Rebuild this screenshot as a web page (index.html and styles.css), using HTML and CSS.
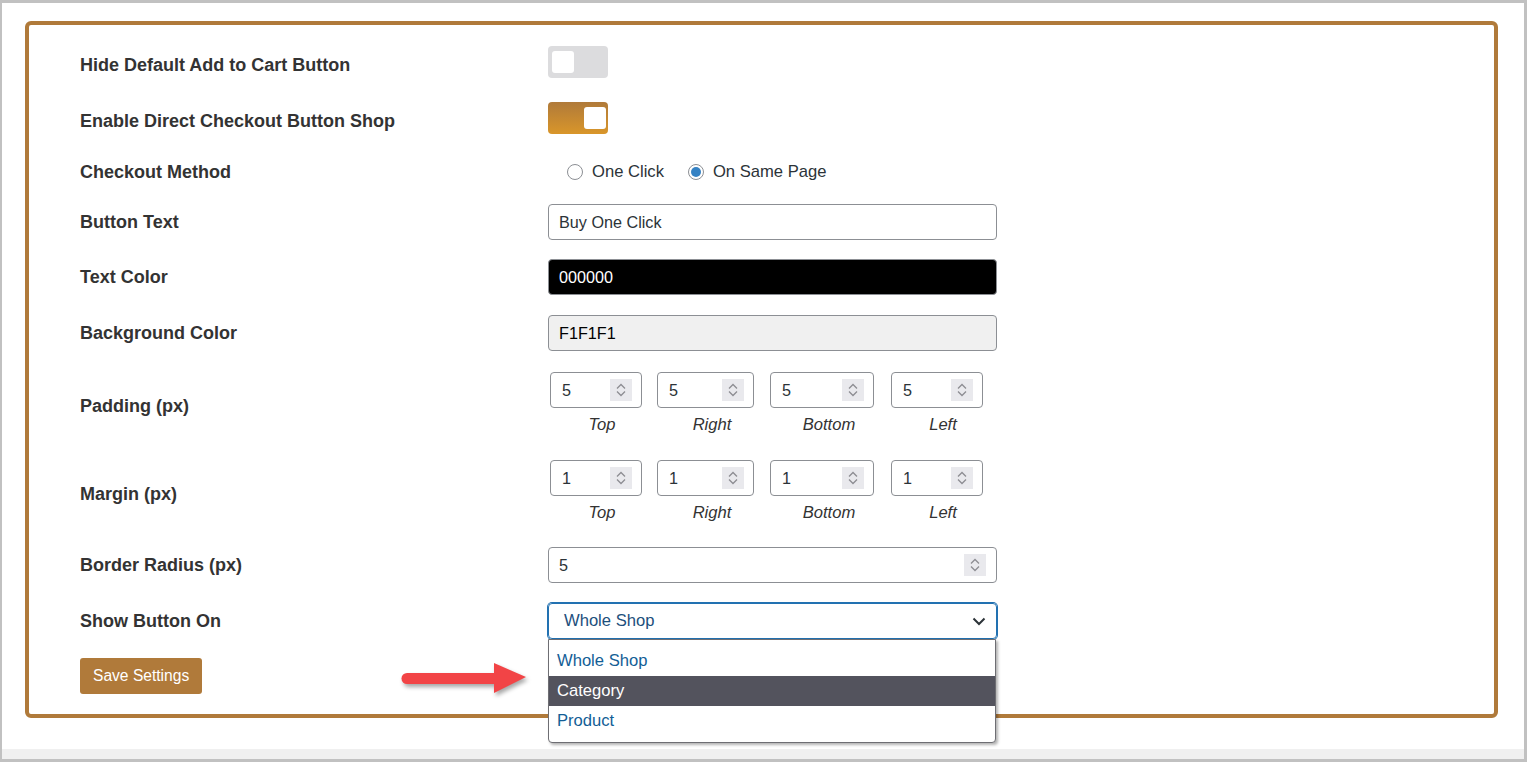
FILE: index.html
```html
<!DOCTYPE html>
<html lang="en">
<head>
  <meta charset="UTF-8">
  <title>Direct Checkout Settings</title>
  <link rel="stylesheet" href="styles.css">
</head>
<body>
<div class="frame">
  <div class="card">

    <div class="row row-toggle">
      <div class="label">Hide Default Add to Cart Button</div>
      <div><span class="toggle"><span class="knob"></span></span></div>
    </div>

    <div class="row row-toggle">
      <div class="label">Enable Direct Checkout Button Shop</div>
      <div><span class="toggle on"><span class="knob"></span></span></div>
    </div>

    <div class="row row-radio">
      <div class="label">Checkout Method</div>
      <div class="radios">
        <span class="radio"></span><span class="radio-text">One Click</span>
        <span class="radio checked"></span><span class="radio-text">On Same Page</span>
      </div>
    </div>

    <div class="row">
      <div class="label">Button Text</div>
      <div class="input">Buy One Click</div>
    </div>

    <div class="row row-tight">
      <div class="label">Text Color</div>
      <div class="input input-black">000000</div>
    </div>

    <div class="row">
      <div class="label">Background Color</div>
      <div class="input input-grey">F1F1F1</div>
    </div>

    <div class="row row-sides row-pad">
      <div class="label">Padding (px)</div>
      <div class="sides">
        <div class="side s-top"><div class="num">5<span class="spin"><svg width="22" height="22" viewBox="0 0 22 22"><path d="M7 9.5l4-4 4 4M7 12.5l4 4 4-4" fill="none" stroke="#8d8d92" stroke-width="1.3"/></svg></span></div><i>Top</i></div>
        <div class="side s-right"><div class="num">5<span class="spin"><svg width="22" height="22" viewBox="0 0 22 22"><path d="M7 9.5l4-4 4 4M7 12.5l4 4 4-4" fill="none" stroke="#8d8d92" stroke-width="1.3"/></svg></span></div><i>Right</i></div>
        <div class="side s-bottom"><div class="num">5<span class="spin"><svg width="22" height="22" viewBox="0 0 22 22"><path d="M7 9.5l4-4 4 4M7 12.5l4 4 4-4" fill="none" stroke="#8d8d92" stroke-width="1.3"/></svg></span></div><i>Bottom</i></div>
        <div class="side s-left"><div class="num">5<span class="spin"><svg width="22" height="22" viewBox="0 0 22 22"><path d="M7 9.5l4-4 4 4M7 12.5l4 4 4-4" fill="none" stroke="#8d8d92" stroke-width="1.3"/></svg></span></div><i>Left</i></div>
      </div>
    </div>

    <div class="row row-sides">
      <div class="label">Margin (px)</div>
      <div class="sides">
        <div class="side s-top"><div class="num">1<span class="spin"><svg width="22" height="22" viewBox="0 0 22 22"><path d="M7 9.5l4-4 4 4M7 12.5l4 4 4-4" fill="none" stroke="#8d8d92" stroke-width="1.3"/></svg></span></div><i>Top</i></div>
        <div class="side s-right"><div class="num">1<span class="spin"><svg width="22" height="22" viewBox="0 0 22 22"><path d="M7 9.5l4-4 4 4M7 12.5l4 4 4-4" fill="none" stroke="#8d8d92" stroke-width="1.3"/></svg></span></div><i>Right</i></div>
        <div class="side s-bottom"><div class="num">1<span class="spin"><svg width="22" height="22" viewBox="0 0 22 22"><path d="M7 9.5l4-4 4 4M7 12.5l4 4 4-4" fill="none" stroke="#8d8d92" stroke-width="1.3"/></svg></span></div><i>Bottom</i></div>
        <div class="side s-left"><div class="num">1<span class="spin"><svg width="22" height="22" viewBox="0 0 22 22"><path d="M7 9.5l4-4 4 4M7 12.5l4 4 4-4" fill="none" stroke="#8d8d92" stroke-width="1.3"/></svg></span></div><i>Left</i></div>
      </div>
    </div>

    <div class="row row-tight">
      <div class="label">Border Radius (px)</div>
      <div class="input input-num">5<span class="spin"><svg width="22" height="22" viewBox="0 0 22 22"><path d="M7 9.5l4-4 4 4M7 12.5l4 4 4-4" fill="none" stroke="#8d8d92" stroke-width="1.3"/></svg></span></div>
    </div>

    <div class="row">
      <div class="label">Show Button On</div>
      <div class="select-wrap">
        <div class="select">Whole Shop
          <svg class="chev" width="14" height="9" viewBox="0 0 14 9"><path d="M1.5 1.5l5.5 5.5 5.5-5.5" fill="none" stroke="#2c3338" stroke-width="2"/></svg>
        </div>
        <!-- open dropdown list -->
        <div class="options">
          <div class="option">Whole Shop</div>
          <div class="option hover">Category</div>
          <div class="option">Product</div>
        </div>
      </div>
    </div>

    <div class="actions">
      <button class="save">Save Settings</button>
    </div>

    <svg class="arrow" width="136" height="44" viewBox="0 0 136 44">
      <line x1="11" y1="21.5" x2="100" y2="21.5" stroke="#f24446" stroke-width="11" stroke-linecap="round"/>
      <polygon points="98,6 130,20 98,36" fill="#f24446"/>
    </svg>
  </div>
  <div class="strip"></div>
</div>
</body>
</html>
```

FILE: styles.css
```css
body { margin: 0; font-family: "Liberation Sans", Arial, sans-serif; color: #333; background: #fff; }
.frame { height: 762px; box-sizing: border-box; border: 3px solid #c1c1c1; border-left-width: 2px; padding: 18px 26px 0 23px; display: flex; flex-direction: column; }
.card { position: relative; height: 697px; box-sizing: border-box; border: 4px solid #b07a3a; border-radius: 6px; padding: 21px 0 0 51px; display: flex; flex-direction: column; gap: 20px; }
.strip { margin: auto -26px 0 -23px; height: 10px; background: #f0f0f0; }

.row { display: grid; grid-template-columns: 468px 449px; align-items: center; min-height: 36px; }
.row-toggle { min-height: 32px; margin-bottom: 4px; }
.row-toggle .label { margin-top: 6px; }
.row-radio { min-height: 24px; margin-top: 2px; }
.row-tight { margin-top: -1px; }
.row-sides { min-height: 68px; }
.row-pad { margin-top: 1px; }
.row-sides .sides { align-self: start; }
.label { font-size: 18px; font-weight: bold; color: #333; }

.toggle { display: flex; align-items: center; width: 60px; height: 32px; box-sizing: border-box; padding: 0 4px; border-radius: 4px; background: #dcdcde; }
.toggle.on { background: linear-gradient(#b07a3a, #d9962a); justify-content: flex-end; padding: 0 2px; }
.knob { width: 22px; height: 22px; border-radius: 3px; background: #fff; }

.radios { display: flex; align-items: center; padding-left: 19px; font-size: 16.6px; color: #2c3338; }
.radio { width: 16px; height: 16px; box-sizing: border-box; border: 1px solid #8c8f94; border-radius: 50%; background: #fff; margin-right: 9px; display: flex; align-items: center; justify-content: center; }
.radio.checked::after { content: ""; width: 10px; height: 10px; border-radius: 50%; background: #3582c4; }
.radio-text { margin-right: 24px; }

.input { height: 36px; box-sizing: border-box; border: 1px solid #8c8f94; border-radius: 4px; padding: 0 10px; display: flex; align-items: center; font-size: 16.2px; color: #2c3338; background: #fff; }
.input-black { background: #000; color: #fff; }
.input-grey { background: #f0f0f0; color: #000; }
.input-num { justify-content: space-between; padding-right: 10px; }
.spin { display: flex; width: 22px; height: 22px; background: #e9e9ed; }

.sides { display: flex; gap: 3px; margin-left: 2px; }
.side { display: flex; flex-direction: column; }
.side i { font-size: 16.6px; color: #333; text-align: center; margin-top: 7px; line-height: 20px; }
.s-top { width: 104px; }
.s-right { width: 110px; }
.s-bottom { width: 118px; }
.s-left { width: 104px; }
.num { width: 88.5%; height: 36px; box-sizing: border-box; border: 1px solid #8c8f94; border-radius: 4px; padding: 0 9px 0 11px; display: flex; align-items: center; justify-content: space-between; font-size: 16.2px; color: #2c3338; }

.select-wrap { position: relative; }
.select { height: 36px; box-sizing: border-box; border: 1px solid #2271b1; box-shadow: 0 0 0 1px #2271b1; border-radius: 4px; padding: 0 10px 0 15px; display: flex; align-items: center; justify-content: space-between; font-size: 16.6px; color: #1d4f7c; }
.options { position: absolute; top: 36px; left: 0; width: 448px; height: 104px; box-sizing: border-box; border: 1px solid #6e6e73; border-radius: 0 0 4px 4px; background: #fff; padding-top: 6px; box-shadow: 2px 2px 3px rgba(0, 0, 0, 0.3); z-index: 5; }
.option { height: 30px; line-height: 30px; padding-left: 8px; font-size: 16.6px; color: #135e96; }
.option.hover { background: #53535d; color: #fff; }

.actions { display: flex; margin-top: -1px; }
.save { height: 36px; padding: 0 13px; border: none; border-radius: 3px; background: #b07a3a; color: #fff; font-family: "Liberation Sans", Arial, sans-serif; font-size: 15.6px; }

.arrow { position: absolute; left: 367px; top: 632px; filter: drop-shadow(2px 3px 2px rgba(0, 0, 0, 0.35)); }
```
